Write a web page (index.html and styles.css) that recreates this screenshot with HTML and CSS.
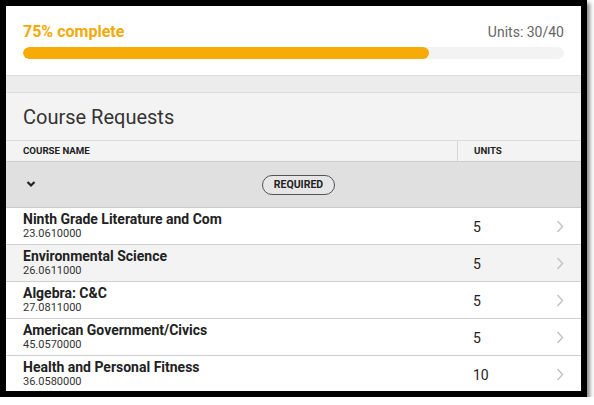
FILE: index.html
```html
<!DOCTYPE html>
<html>
<head>
<meta charset="utf-8">
<link rel="stylesheet" href="styles.css">
</head>
<body>
<div class="frame">
  <div class="progress-card">
    <div class="progress-top">
      <span class="pct">75% complete</span>
      <span class="units-total">Units: 30/40</span>
    </div>
    <div class="bar"><div class="bar-fill" style="width:75%"></div></div>
  </div>
  <div class="band"></div>
  <div class="section-title">Course Requests</div>
  <div class="table">
    <div class="thead">
      <div class="col-name">COURSE NAME</div>
      <div class="col-units">UNITS</div>
    </div>
    <div class="group">
      <svg class="chev-down" width="10" height="8" viewBox="0 0 10 8"><path d="M1.5 2 L5 5.5 L8.5 2" fill="none" stroke="#222" stroke-width="2.2"/></svg>
      <span class="pill">REQUIRED</span>
    </div>
    <div class="row">
      <div class="col-name"><div class="cname">Ninth Grade Literature and Com</div><div class="code">23.0610000</div></div>
      <div class="col-units">5</div>
      <svg class="chev-right" width="8" height="13" viewBox="0 0 8 13"><path d="M1.5 1 L6.5 6.5 L1.5 12" fill="none" stroke="#c4c4c4" stroke-width="1.5"/></svg>
    </div>
    <div class="row alt">
      <div class="col-name"><div class="cname">Environmental Science</div><div class="code">26.0611000</div></div>
      <div class="col-units">5</div>
      <svg class="chev-right" width="8" height="13" viewBox="0 0 8 13"><path d="M1.5 1 L6.5 6.5 L1.5 12" fill="none" stroke="#c4c4c4" stroke-width="1.5"/></svg>
    </div>
    <div class="row">
      <div class="col-name"><div class="cname">Algebra: C&amp;C</div><div class="code">27.0811000</div></div>
      <div class="col-units">5</div>
      <svg class="chev-right" width="8" height="13" viewBox="0 0 8 13"><path d="M1.5 1 L6.5 6.5 L1.5 12" fill="none" stroke="#c4c4c4" stroke-width="1.5"/></svg>
    </div>
    <div class="row">
      <div class="col-name"><div class="cname">American Government/Civics</div><div class="code">45.0570000</div></div>
      <div class="col-units">5</div>
      <svg class="chev-right" width="8" height="13" viewBox="0 0 8 13"><path d="M1.5 1 L6.5 6.5 L1.5 12" fill="none" stroke="#c4c4c4" stroke-width="1.5"/></svg>
    </div>
    <div class="row">
      <div class="col-name"><div class="cname">Health and Personal Fitness</div><div class="code">36.0580000</div></div>
      <div class="col-units">10</div>
      <svg class="chev-right" width="8" height="13" viewBox="0 0 8 13"><path d="M1.5 1 L6.5 6.5 L1.5 12" fill="none" stroke="#c4c4c4" stroke-width="1.5"/></svg>
    </div>
  </div>
</div>
</body>
</html>
```
FILE: styles.css
```css
* { box-sizing: border-box; }
html, body { margin: 0; padding: 0; background: #fff; }
body { font-family: Roboto, "Liberation Sans", Arial, sans-serif; color: #222; }

.frame {
  width: 587px;
  height: 397px;
  border: 6px solid #000;
  background: #f3f3f3;
  overflow: hidden;
  box-shadow: 3px 3px 4px rgba(0,0,0,0.45);
}

.progress-card {
  background: #fff;
  height: 70px;
  padding: 16px 17px 0 17px;
  border-bottom: 1px solid #dedede;
}
.progress-top {
  display: flex;
  justify-content: space-between;
  align-items: baseline;
  height: 20px;
  line-height: 20px;
}
.pct { color: #f5a905; font-weight: 700; font-size: 16px; }
.units-total { color: #666; font-size: 14px; }
.bar {
  margin-top: 5px;
  height: 12px;
  border-radius: 6px;
  background: #f3f3f3;
  overflow: hidden;
}
.bar-fill { height: 100%; background: #f7ab07; border-radius: 6px; }

.band {
  height: 17px;
  background: #ececec;
  border-bottom: 1px solid #dedede;
}

.section-title {
  height: 48px;
  padding-left: 17px;
  display: flex;
  align-items: center;
  font-size: 20px;
  color: #333;
  border-bottom: 1px solid #dcdcdc;
}

.thead {
  display: flex;
  height: 21px;
  align-items: stretch;
  border-bottom: 1px solid #cfcfcf;
  font-size: 9.7px;
  font-weight: 700;
  color: #222;
}
.thead .col-name { display: flex; align-items: center; padding-bottom: 2px; }
.thead .col-units { display: flex; align-items: center; padding-bottom: 2px; border-left: 1px solid #d6d6d6; }
.col-name { width: 451px; padding-left: 17px; }
.col-units { padding-left: 16px; }

.group {
  height: 46px;
  background: #e0e0e0;
  border-bottom: 1px solid #cacaca;
  display: flex;
  align-items: center;
  justify-content: center;
  position: relative;
}
.chev-down { position: absolute; left: 20px; top: 18px; }
.pill {
  border: 1px solid #555;
  border-radius: 11px;
  padding: 0 11px;
  height: 20px;
  line-height: 18px;
  font-size: 10.5px;
  font-weight: 700;
  color: #222;
  background: #e6e6e6;
  margin-left: 10px;
}

.row {
  height: 37px;
  background: #fff;
  border-bottom: 1px solid #cfcfcf;
  display: flex;
  align-items: center;
}
.row.alt { background: #f3f3f3; }
.row .col-name { padding-bottom: 2px; }
.cname { font-size: 14px; font-weight: 700; color: #222; line-height: 16px; }
.code { font-size: 11px; color: #333; line-height: 13px; }
.row .col-units { width: 99px; font-size: 14px; color: #222; padding-top: 2px; }
.chev-right { display: block; margin-top: 1px; }
```
